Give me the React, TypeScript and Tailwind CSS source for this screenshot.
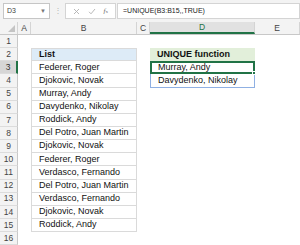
import React from "react";

const LIST = [
  "Federer, Roger",
  "Djokovic, Novak",
  "Murray, Andy",
  "Davydenko, Nikolay",
  "Roddick, Andy",
  "Del Potro, Juan Martin",
  "Djokovic, Novak",
  "Federer, Roger",
  "Verdasco, Fernando",
  "Del Potro, Juan Martin",
  "Verdasco, Fernando",
  "Djokovic, Novak",
  "Roddick, Andy",
];

const COLS = ["A", "B", "C", "D", "E"];

function FormulaBar() {
  return (
    <div className="flex h-[22px] items-center bg-[#f3f3f3] pl-[3px] text-[#444]">
      <div className="flex h-[16px] w-[47px] items-center justify-between border border-[#c6c6c6] bg-white pl-[3px] pr-[3px] text-[7px]">
        <span>D3</span>
        <span className="text-[6px] text-[#777]">▼</span>
      </div>
      <div className="flex w-[15px] justify-center text-[8px] leading-none text-[#b5b5b5]">⋮</div>
      <div className="flex h-[16px] w-[51px] items-center justify-around border border-[#d4d4d4] bg-white px-[3px] text-[#aaa]">
        <svg width="7" height="7" viewBox="0 0 7 7">
          <path d="M1 1 L6 6 M6 1 L1 6" stroke="#b0b0b0" strokeWidth="0.9" />
        </svg>
        <svg width="8" height="7" viewBox="0 0 8 7">
          <path d="M1 3.8 L3 5.8 L7 1" stroke="#b0b0b0" strokeWidth="0.9" fill="none" />
        </svg>
        <span className="text-[7px] italic text-[#666]" style={{ fontFamily: "'Liberation Serif', serif" }}>
          f<span className="text-[5px] not-italic">x</span>
        </span>
      </div>
      <div className="ml-[1px] flex h-[16px] flex-1 items-center border border-[#d4d4d4] bg-white pl-[5px] text-[7px] text-[#222]">
        =UNIQUE(B3:B15,,TRUE)
      </div>
    </div>
  );
}

export default function App() {
  const widths = ["w-[13px]", "w-[106px]", "w-[13px]", "w-[105px]", "flex-1"];
  const rows = Array.from({ length: 16 }, (_, i) => i + 1);

  return (
    <div
      className="h-[245px] w-[300px] overflow-hidden bg-white text-[9px] text-[#111]"
      style={{ fontFamily: "'Liberation Sans', Arial, sans-serif" }}
    >
      <FormulaBar />

      {/* column headers */}
      <div className="flex h-[13px] border-b border-[#c8c8c8] bg-[#f3f3f3] text-[8.5px] text-[#444]">
        <div className="relative w-[18px] border-r border-[#d4d4d4]">
          <div className="absolute bottom-[2px] right-[2px] h-0 w-0 border-b-[7px] border-l-[7px] border-b-[#c4c4c4] border-l-transparent" />
        </div>
        {COLS.map((c, i) => (
          <div
            key={c}
            className={`${widths[i]} flex items-center justify-center border-r border-[#d4d4d4] ${
              c === "D" ? "border-b-2 border-b-[#217346] bg-[#e1e1e1] text-[#217346]" : ""
            }`}
          >
            {c}
          </div>
        ))}
      </div>

      {/* rows */}
      {rows.map((r) => {
        const listText = r === 2 ? "List" : r >= 3 && r <= 15 ? LIST[r - 3] : null;
        const inList = r >= 2 && r <= 15;
        return (
          <div key={r} className="flex h-[13.15px]">
            <div
              className={`flex w-[18px] items-center justify-center border-b border-[#dcdcdc] text-[8.5px] ${
                r === 3
                  ? "border-r-2 border-r-[#217346] bg-[#d6d6d6] text-[#333]"
                  : "border-r border-r-[#c8c8c8] bg-[#f3f3f3] text-[#444]"
              }`}
            >
              {r}
            </div>
            <div className="w-[13px]" />
            <div
              className={`flex w-[106px] items-center pl-[7px] ${
                inList ? "border-x border-b border-[#dadada]" : ""
              } ${r === 2 ? "border-t bg-[#ddebf7] font-bold" : ""}`}
            >
              {listText}
            </div>
            <div className="w-[13px]" />
            {r === 2 ? (
              <div className="flex w-[105px] items-center bg-[#e2efda] pl-[7px] font-bold">UNIQUE function</div>
            ) : r === 3 ? (
              <div className="relative flex w-[105px] items-center border-2 border-[#217346] pl-[6px]">
                Murray, Andy
                <div className="absolute -bottom-[3px] -right-[3px] h-[4px] w-[4px] border border-white bg-[#217346]" />
              </div>
            ) : r === 4 ? (
              <div className="flex w-[105px] items-center border-x border-b border-[#8fb0e3] pl-[7px]">
                Davydenko, Nikolay
              </div>
            ) : (
              <div className="w-[105px]" />
            )}
            <div className="flex-1" />
          </div>
        );
      })}
    </div>
  );
}
